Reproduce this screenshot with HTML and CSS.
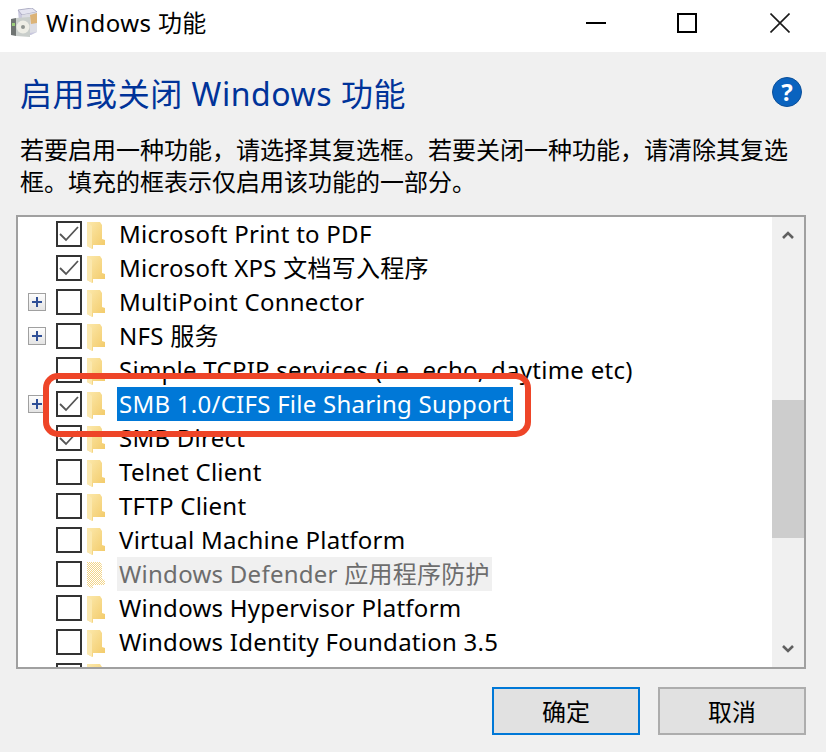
FILE: index.html
```html
<!DOCTYPE html>
<html lang="zh-CN">
  <head>
    <meta charset="UTF-8" />
    <title>Windows 功能</title>
    <link rel="stylesheet" href="styles.css">
  </head>
  <body>
    <svg class="defs" width="0" height="0">
      <defs>
        <linearGradient id="fold" x1="0" y1="0" x2="1" y2="1">
          <stop offset="0" stop-color="#fce9ac" />
          <stop offset="1" stop-color="#f2c966" />
        </linearGradient>
        <pattern id="dither" width="2" height="2" patternUnits="userSpaceOnUse">
          <rect width="1" height="1" fill="#f3d588" />
          <rect x="1" y="1" width="1" height="1" fill="#f3d588" />
        </pattern>
        <symbol id="folder" viewBox="0 0 18 27">
          <path d="M0 0H13L15 3V17L18 18V23H6V27L0 24Z" fill="url(#fold)" />
          <path d="M0 0L5 4V27L0 24Z" fill="#fbe8ae" />
        </symbol>
        <symbol id="folder-off" viewBox="0 0 18 27">
          <path d="M0 0H13L15 3V17L18 18V23H6V27L0 24Z" fill="url(#dither)" />
        </symbol>
      </defs>
    </svg>

    <div class="window">
      <header class="titlebar">
        <svg class="app-icon" width="28" height="30" viewBox="0 0 28 30">
          <path d="M8 2L22 0L27 4V24L21 27H10Z" fill="#c9c8de" />
          <path d="M8 2L22 0L27 4L12 7Z" fill="#e4e4f0" stroke="#9b9bb5" stroke-width="0.7" />
          <path d="M12 7L27 4V24L12 26Z" fill="#dcdde4" />
          <path d="M20 7L27 5V15L21 16Z" fill="#dcb377" />
          <path d="M1 11L6 10V28L1 27Z" fill="#6f7472" />
          <path d="M6 10L20 9V29L6 28Z" fill="#c9cecb" />
          <circle cx="13" cy="19" r="6.5" fill="#eeeee6" />
          <circle cx="13" cy="19" r="2" fill="#8f9490" />
          <rect x="2" y="15" width="3" height="3" fill="#9ccf7a" />
        </svg>
        <span class="title">Windows 功能</span>
        <div class="win-controls">
          <span class="win-btn"><span class="win-min"></span></span>
          <span class="win-btn"><span class="win-max"></span></span>
          <span class="win-btn">
            <svg width="20" height="20" viewBox="0 0 20 20"><path d="M0.5 0.5L19.5 19.5M19.5 0.5L0.5 19.5" stroke="#1a1a1a" stroke-width="1.6" /></svg>
          </span>
        </div>
      </header>

      <main class="content">
        <div class="heading-row">
          <h1>启用或关闭 Windows 功能</h1>
          <span class="help">?</span>
        </div>
        <p class="intro">若要启用一种功能，请选择其复选框。若要关闭一种功能，请清除其复选框。填充的框表示仅启用该功能的一部分。</p>

        <div class="tree">
          <div class="tree-rows" id="rows"></div>
          <div class="scrollbar">
            <svg class="arrow" width="12" height="8" viewBox="0 0 12 8"><path d="M1 7L6 2L11 7" fill="none" stroke="#606060" stroke-width="2.6" /></svg>
            <div class="track"><div class="thumb"></div></div>
            <svg class="arrow" width="12" height="8" viewBox="0 0 12 8"><path d="M1 1L6 6L11 1" fill="none" stroke="#606060" stroke-width="2.6" /></svg>
          </div>
        </div>

        <div class="actions">
          <button class="btn btn-default">确定</button>
          <button class="btn">取消</button>
        </div>
      </main>

      <div class="callout"></div>
    </div>

    <script>
      const features = [
        { name: "Microsoft Print to PDF", checked: true },
        { name: "Microsoft XPS 文档写入程序", checked: true },
        { name: "MultiPoint Connector", expand: true },
        { name: "NFS 服务", expand: true },
        { name: "Simple TCPIP services (i.e. echo, daytime etc)" },
        { name: "SMB 1.0/CIFS File Sharing Support", checked: true, expand: true, selected: true },
        { name: "SMB Direct", checked: true },
        { name: "Telnet Client" },
        { name: "TFTP Client" },
        { name: "Virtual Machine Platform" },
        { name: "Windows Defender 应用程序防护", disabled: true },
        { name: "Windows Hypervisor Platform" },
        { name: "Windows Identity Foundation 3.5" },
        { name: "Windows PowerShell 2.0", checked: true, expand: true },
      ];

      const rows = document.getElementById("rows");

      features.forEach((item) => {
        const expander = item.expand
          ? '<span class="expander"><svg width="10" height="10" viewBox="0 0 10 10"><path d="M5 0V10M0 5H10" stroke="#2f4f96" stroke-width="2" /></svg></span>'
          : "";
        const tick = item.checked
          ? '<svg width="20" height="16" viewBox="0 0 20 16"><path d="M1 8L7 14L19 1" fill="none" stroke="#555" stroke-width="1.8" /></svg>'
          : "";
        const labelClass = item.selected ? "label selected" : item.disabled ? "label disabled" : "label";
        rows.innerHTML += `
          <div class="row">
            <span class="expander-slot">${expander}</span>
            <span class="checkbox">${tick}</span>
            <svg class="folder" width="18" height="27"><use href="#${item.disabled ? "folder-off" : "folder"}" /></svg>
            <span class="${labelClass}">${item.name}</span>
          </div>`;
      });
    </script>
  </body>
</html>
```

FILE: styles.css
```css
* {
  margin: 0;
  padding: 0;
  box-sizing: border-box;
}
body {
  background: #f0f0f0;
  font-family: "Noto Sans", "Noto Sans CJK SC", sans-serif;
  color: #000;
  overflow: hidden;
}
.defs {
  display: block;
  height: 0;
}
.window {
  position: relative;
  width: 826px;
  height: 752px;
}
.titlebar {
  height: 52px;
  background: #fff;
  display: flex;
  align-items: center;
  padding: 0 0 6px 10px;
}
.app-icon {
  margin-right: 8px;
}
.title {
  font-size: 24px;
  letter-spacing: 0.4px;
  padding-bottom: 3px;
}
.win-controls {
  margin-left: auto;
  display: flex;
}
.win-btn {
  width: 92px;
  height: 46px;
  display: flex;
  align-items: center;
  justify-content: center;
}
.win-min {
  display: block;
  width: 20px;
  height: 2px;
  background: #000;
}
.win-max {
  display: block;
  width: 20px;
  height: 20px;
  border: 2px solid #000;
  margin-right: 2px;
}
.content {
  padding: 0 20px 0 16px;
}
.heading-row {
  display: flex;
  align-items: center;
  justify-content: space-between;
  height: 82px;
  padding: 0 4px 2px 4px;
}
h1 {
  font-size: 32px;
  font-weight: 400;
  color: #003399;
  letter-spacing: 0.55px;
}
.help {
  width: 30px;
  height: 30px;
  border-radius: 50%;
  background: #0a63bf;
  border: 1px solid #0a4f9a;
  color: #fff;
  font-size: 24px;
  font-weight: 700;
  line-height: 28px;
  text-align: center;
}
.intro {
  padding-left: 4px;
  width: 776px;
  font-size: 24px;
  line-height: 32px;
  height: 81px;
}
.tree {
  display: flex;
  width: 790px;
  height: 454px;
  background: #fff;
  border: 2px solid #a0a0a0;
}
.tree-rows {
  flex: 1;
  overflow: hidden;
}
.row {
  height: 34px;
  display: flex;
  align-items: center;
  font-size: 24px;
  letter-spacing: 0.26px;
  white-space: nowrap;
}
.expander-slot {
  width: 38px;
  padding-left: 10px;
  display: flex;
}
.expander {
  width: 18px;
  height: 18px;
  border: 1px solid #a0a0a0;
  background: linear-gradient(#fdfdfd, #e4e4e4);
  display: flex;
  align-items: center;
  justify-content: center;
}
.checkbox {
  width: 26px;
  height: 26px;
  border: 2px solid #333;
  background: #fff;
  display: flex;
  align-items: center;
  justify-content: center;
}
.folder {
  margin: 2px 0 0 5px;
}
.label {
  margin-left: 12px;
  padding: 0 2px;
  height: 34px;
  line-height: 34px;
}
.label.selected {
  background: #0078d7;
  color: #fff;
}
.label.disabled {
  background: #f0f0f0;
  color: #6d6d6d;
}
.scrollbar {
  width: 32px;
  background: #f0f0f0;
  display: flex;
  flex-direction: column;
  align-items: center;
}
.arrow {
  flex: none;
  margin: 14px 0;
}
.track {
  flex: 1;
  width: 100%;
  padding-top: 147px;
}
.thumb {
  height: 138px;
  background: #cdcdcd;
}
.actions {
  display: flex;
  justify-content: flex-end;
  gap: 18px;
  width: 790px;
  margin-top: 18px;
}
.btn {
  width: 148px;
  height: 48px;
  padding-bottom: 2px;
  background: #e1e1e1;
  border: 2px solid #adadad;
  font-family: inherit;
  font-size: 24px;
  color: #000;
}
.btn-default {
  border-color: #0078d7;
}
.callout {
  position: absolute;
  left: 43px;
  top: 373px;
  width: 488px;
  height: 64px;
  border: 6px solid #ee4528;
  border-radius: 15px;
}
```
